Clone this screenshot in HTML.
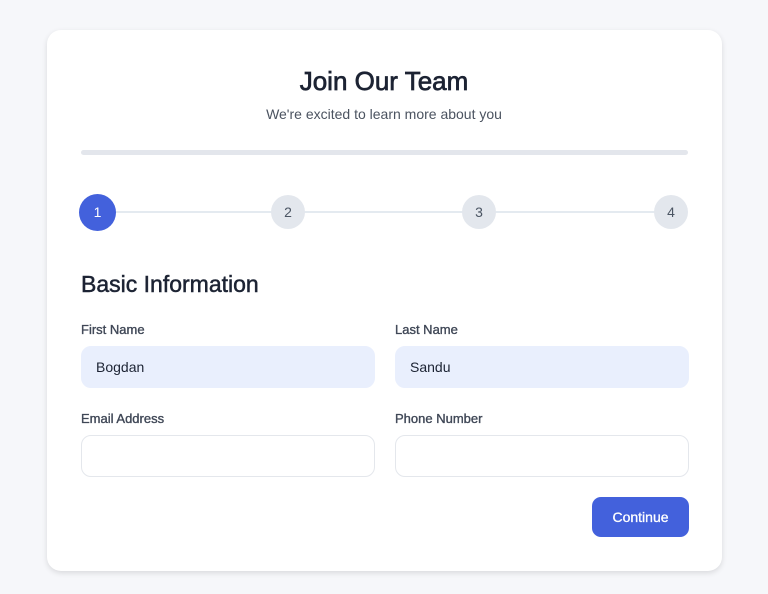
<!DOCTYPE html>
<html><head><style>
*{box-sizing:border-box;margin:0;padding:0}
body{width:768px;height:594px;background:#f6f7fa;font-family:"Liberation Sans",sans-serif;position:relative;overflow:hidden}
.card{position:absolute;left:47px;top:30px;width:675px;height:541px;background:#fff;border-radius:14px;box-shadow:0 2px 6px rgba(0,0,0,.12)}
.abs{position:absolute}
h1{position:absolute;left:0;width:100%;top:66px;text-align:center;font-size:26px;font-weight:normal;color:#1c2333;-webkit-text-stroke:.7px #1c2333}
.sub{position:absolute;left:0;width:100%;top:106px;text-align:center;font-size:14px;color:#4b5360}
.bar{left:81px;top:150px;width:607px;height:5px;background:#e3e6ec;border-radius:3px}
.line{left:98px;top:211px;width:573px;height:2px;background:#e4eaf0}
.c{width:34px;height:34px;border-radius:50%;background:#e3e7ed;color:#4b5563;font-size:14px;text-align:center;line-height:34px;top:195px}
.c1{width:37px;height:37px;line-height:37px;background:#4361dc;color:#fff;top:194px;left:79px}
h2{position:absolute;left:81px;top:271px;font-size:23px;font-weight:normal;color:#1c2333;-webkit-text-stroke:.5px #1c2333}
.lbl{font-size:13px;color:#3f4756;-webkit-text-stroke:.35px #3f4756}
.in{height:42px;width:294px;border-radius:10px;border:1px solid #e4e7ec;font-size:14px;color:#1c2333;padding-left:14px;line-height:40px}
.f{background:#e9effd;border-color:#e9effd}
.btn{left:592px;top:497px;width:97px;height:40px;background:#4361dc;color:#fff;border-radius:9px;font-size:14px;text-align:center;line-height:40px;-webkit-text-stroke:.3px #fff}
</style></head><body>
<div class="card"></div>
<h1>Join Our Team</h1>
<div class="sub">We're excited to learn more about you</div>
<div class="abs bar"></div>
<div class="abs line"></div>
<div class="abs c c1">1</div>
<div class="abs c" style="left:271px">2</div>
<div class="abs c" style="left:462px">3</div>
<div class="abs c" style="left:654px">4</div>
<h2>Basic Information</h2>
<div class="abs lbl" style="left:81px;top:322px">First Name</div>
<div class="abs lbl" style="left:395px;top:322px">Last Name</div>
<div class="abs in f" style="left:81px;top:346px">Bogdan</div>
<div class="abs in f" style="left:395px;top:346px">Sandu</div>
<div class="abs lbl" style="left:81px;top:411px">Email Address</div>
<div class="abs lbl" style="left:395px;top:411px">Phone Number</div>
<div class="abs in" style="left:81px;top:435px"></div>
<div class="abs in" style="left:395px;top:435px"></div>
<div class="abs btn">Continue</div>
</body></html>
